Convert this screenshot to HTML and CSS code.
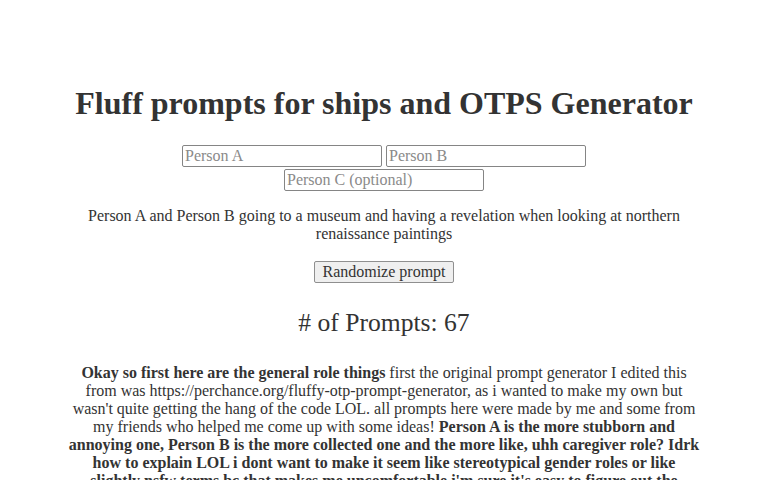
FILE: index.html
```html
<!DOCTYPE html>
<html lang="en">
<head>
<meta charset="utf-8">
<title>Fluff prompts for ships and OTPS Generator</title>
<link rel="stylesheet" href="styles.css">
</head>
<body>
<main class="page">
  <h1 class="title">Fluff prompts for ships and OTPS Generator</h1>

  <div class="names">
    <div class="names-row">
      <input class="name-input" type="text" placeholder="Person A">
      <input class="name-input" type="text" placeholder="Person B">
    </div>
    <div class="names-row">
      <input class="name-input" type="text" placeholder="Person C (optional)">
    </div>
  </div>

  <p class="prompt">Person A and Person B going to a museum and having a revelation when looking at northern renaissance paintings</p>

  <button class="randomize" type="button">Randomize prompt</button>

  <div class="count"># of Prompts: 67</div>

  <p class="notes"><b>Okay so first here are the general role things</b> first the original prompt generator I edited this from was https://perchance.org/fluffy-otp-prompt-generator, as i wanted to make my own but wasn't quite getting the hang of the code LOL. all prompts here were made by me and some from my friends who helped me come up with some ideas! <b>Person A is the more stubborn and annoying one, Person B is the more collected one and the more like, uhh caregiver role? Idrk how to explain LOL i dont want to make it seem like stereotypical gender roles or like slightly nsfw terms bc that makes me uncomfortable i'm sure it's easy to figure out the dynamics from the prompts anyway!</b></p>
</main>
</body>
</html>
```

FILE: styles.css
```css
html, body {
  margin: 0;
  padding: 0;
  background: #ffffff;
}

body {
  font-family: "Liberation Serif", "Times New Roman", serif;
  font-size: 16px;
  line-height: 18px;
  color: #333333;
}

.page {
  width: 632px;
  margin: 0 auto;
  padding-top: 85px;
  display: flex;
  flex-direction: column;
  align-items: center;
  text-align: center;
}

.title {
  margin: 0;
  width: 700px;
  font-size: 32px;
  line-height: 37px;
  font-weight: bold;
}

.names {
  margin-top: 23px;
  display: flex;
  flex-direction: column;
  align-items: center;
  gap: 2px;
}

.names-row {
  display: flex;
  gap: 4px;
}

.name-input {
  box-sizing: border-box;
  width: 200px;
  height: 22px;
  margin: 0;
  padding: 1px 2px;
  border: 1px solid #858585;
  border-radius: 2px;
  font-family: "Liberation Serif", "Times New Roman", serif;
  font-size: 16px;
  color: #333333;
  background: #ffffff;
}

.name-input::placeholder {
  color: #8a8a8a;
}

.prompt {
  margin: 16px 0 0;
  width: 600px;
}

.randomize {
  margin-top: 18px;
  box-sizing: border-box;
  height: 22px;
  padding: 0 7px;
  border: 1px solid #8f8f8f;
  border-radius: 2px;
  background: #efefef;
  font-family: "Liberation Serif", "Times New Roman", serif;
  font-size: 16px;
  line-height: 18px;
  color: #333333;
}

.count {
  margin-top: 26px;
  font-size: 25.6px;
  line-height: 28px;
}

.notes {
  margin: 27px 0 0;
}
```
